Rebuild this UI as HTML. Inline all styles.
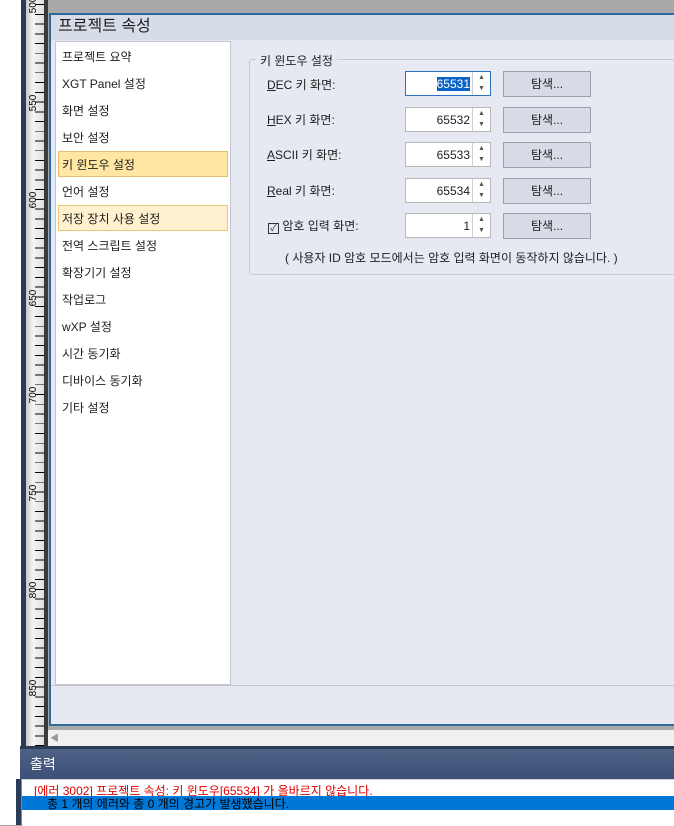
<!DOCTYPE html><html><head><meta charset="utf-8"><style>
body{margin:0;width:674px;height:825px;overflow:hidden;position:relative;background:#a9a9a9;font-family:"Liberation Sans","Noto Sans CJK KR",sans-serif;font-size:12px;color:#1e1e1e}
.a{position:absolute}
.ruler{left:26px;top:0;width:18px;height:748px;background:linear-gradient(90deg,#c8c8c8,#f4f4f4 40%,#e0e0e0);}
.ticks{left:35px;top:0;width:9px;height:748px;background:repeating-linear-gradient(180deg,transparent 0 4px,#000 4px 5px,transparent 5px 9.75px)}
.rl{left:24px;width:20px;font-size:10px;transform:rotate(-90deg);color:#000;text-align:center;line-height:10px}
.li{position:absolute;left:62px;font-size:12px}
.lab{position:absolute;left:267px;font-size:12px}
.inp{position:absolute;left:405px;width:86px;height:25px;background:#fff;border:1px solid #b9b9b9;box-sizing:border-box}
.inp span{position:absolute;right:20px;top:5px}
.sp{position:absolute;right:0;top:0;width:17px;height:23px;border-left:1px solid #d0d0d0;font-size:7px;color:#555;text-align:center;line-height:11px}
.btn{position:absolute;left:503px;width:88px;height:26px;background:#d7dbe6;border:1px solid #9aa0ae;box-sizing:border-box;text-align:center;line-height:24px}
</style></head><body>
<div class="a" style="left:0;top:0;width:21px;height:825px;background:#fff"></div>
<div class="a" style="left:21px;top:0;width:5px;height:748px;background:#2b3a55"></div>
<div class="a ruler"></div><div class="a ticks"></div>
<div class="a rl" style="top:0px">500</div>
<div class="a rl" style="top:98px">550</div>
<div class="a rl" style="top:195px">600</div>
<div class="a rl" style="top:293px">650</div>
<div class="a rl" style="top:390px">700</div>
<div class="a rl" style="top:488px">750</div>
<div class="a rl" style="top:585px">800</div>
<div class="a rl" style="top:683px">850</div>
<div class="a" style="left:44px;top:0;width:4px;height:748px;background:#3a3a3a"></div>
<div class="a" style="left:49px;top:13px;width:630px;height:713px;background:#e6e9f2;border:2px solid #2d6aa0;box-sizing:border-box"></div>
<div class="a" style="left:51px;top:15px;width:623px;height:25px;background:#d6dce8;font-size:16px;line-height:24px;padding-left:7px;color:#1e1e1e">프로젝트 속성</div>
<div class="a" style="left:55px;top:41px;width:176px;height:644px;background:#fff;border:1px solid #c3c6cc;box-sizing:border-box"></div>
<div class="a" style="left:232px;top:41px;width:442px;height:644px;background:#e6e9f2"></div>
<div class="a" style="left:51px;top:685px;width:623px;height:1px;background:#c3c6cc"></div>
<div class="a" style="left:58px;top:151px;width:170px;height:26px;background:#ffe6a3;border:1px solid #e2c16e;box-sizing:border-box"></div>
<div class="a" style="left:58px;top:205px;width:170px;height:26px;background:#fff0cf;border:1px solid #e7c877;box-sizing:border-box"></div>
<div class="li" style="top:48px">프로젝트 요약</div>
<div class="li" style="top:75px">XGT Panel 설정</div>
<div class="li" style="top:102px">화면 설정</div>
<div class="li" style="top:129px">보안 설정</div>
<div class="li" style="top:156px">키 윈도우 설정</div>
<div class="li" style="top:183px">언어 설정</div>
<div class="li" style="top:210px">저장 장치 사용 설정</div>
<div class="li" style="top:237px">전역 스크립트 설정</div>
<div class="li" style="top:264px">확장기기 설정</div>
<div class="li" style="top:291px">작업로그</div>
<div class="li" style="top:318px">wXP 설정</div>
<div class="li" style="top:345px">시간 동기화</div>
<div class="li" style="top:372px">디바이스 동기화</div>
<div class="li" style="top:399px">기타 설정</div>
<div class="a" style="left:249px;top:59px;width:440px;height:216px;border:1px solid #c6c9d0;border-radius:3px;box-sizing:border-box"></div>
<div class="a" style="left:256px;top:52px;background:#e6e9f2;padding:0 4px">키 윈도우 설정</div>
<div class="lab" style="top:76px"><u>D</u>EC 키 화면:</div>
<div class="lab" style="top:111px"><u>H</u>EX 키 화면:</div>
<div class="lab" style="top:146px"><u>A</u>SCII 키 화면:</div>
<div class="lab" style="top:182px"><u>R</u>eal 키 화면:</div>
<div class="lab" style="top:217px;left:268px"><span style="display:inline-block;width:9px;height:9px;border:1px solid #333;font-size:9px;line-height:9px;text-align:center;vertical-align:-1px">✓</span> 암호 입력 화면:</div>
<div class="inp" style="top:71px;border-color:#2a72c0"><span style="background:#0a64c8;color:#fff">65531</span><div class="sp">▲<br>▼</div></div>
<div class="inp" style="top:107px"><span>65532</span><div class="sp">▲<br>▼</div></div>
<div class="inp" style="top:142px"><span>65533</span><div class="sp">▲<br>▼</div></div>
<div class="inp" style="top:178px"><span>65534</span><div class="sp">▲<br>▼</div></div>
<div class="inp" style="top:213px"><span>1</span><div class="sp">▲<br>▼</div></div>
<div class="btn" style="top:71px">탐색...</div>
<div class="btn" style="top:107px">탐색...</div>
<div class="btn" style="top:142px">탐색...</div>
<div class="btn" style="top:178px">탐색...</div>
<div class="btn" style="top:213px">탐색...</div>
<div class="a" style="left:285px;top:249px">( 사용자 ID 암호 모드에서는 암호 입력 화면이 동작하지 않습니다. )</div>
<div class="a" style="left:48px;top:730px;width:626px;height:16px;background:#f0f0f0;color:#999;font-size:9px;line-height:16px;padding-left:2px">◀</div>
<div class="a" style="left:20px;top:746px;width:654px;height:3px;background:#2b3a55"></div>
<div class="a" style="left:20px;top:749px;width:654px;height:30px;background:linear-gradient(#4e6285,#3c4f77);color:#fff;font-size:14px;line-height:30px;padding-left:10px">출력</div>
<div class="a" style="left:16px;top:779px;width:5px;height:46px;background:#2b3a55"></div>
<div class="a" style="left:21px;top:779px;width:653px;height:46px;background:#fff;border-left:1px solid #888;border-top:1px solid #ccc"></div>
<div class="a" style="left:34px;top:782px;color:#e00000;font-size:12px">[에러 3002] 프로젝트 속성: 키 윈도우[65534] 가 올바르지 않습니다.</div>
<div class="a" style="left:22px;top:796px;width:652px;height:14px;background:#0078d7"></div>
<div class="a" style="left:47px;top:795px;color:#000;font-size:12px">총 1 개의 에러와 총 0 개의 경고가 발생했습니다.</div>
</body></html>
